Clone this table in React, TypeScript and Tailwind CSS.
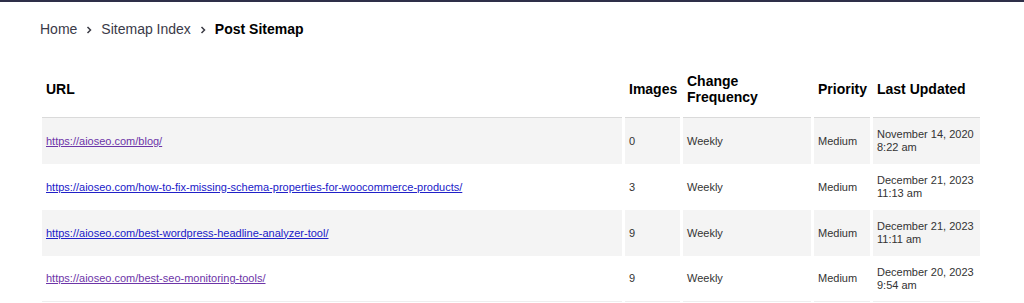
import React from 'react';

// ============================================================================
// Sitemap data
// ============================================================================

type Entry = {
  url: string;
  images: number;
  frequency: string;
  priority: string;
  date: string;
  time: string;
  visited: boolean;
};

const entries: Entry[] = [
  {
    url: 'https://aioseo.com/blog/',
    images: 0,
    frequency: 'Weekly',
    priority: 'Medium',
    date: 'November 14, 2020',
    time: '8:22 am',
    visited: true,
  },
  {
    url: 'https://aioseo.com/how-to-fix-missing-schema-properties-for-woocommerce-products/',
    images: 3,
    frequency: 'Weekly',
    priority: 'Medium',
    date: 'December 21, 2023',
    time: '11:13 am',
    visited: false,
  },
  {
    url: 'https://aioseo.com/best-wordpress-headline-analyzer-tool/',
    images: 9,
    frequency: 'Weekly',
    priority: 'Medium',
    date: 'December 21, 2023',
    time: '11:11 am',
    visited: false,
  },
  {
    url: 'https://aioseo.com/best-seo-monitoring-tools/',
    images: 9,
    frequency: 'Weekly',
    priority: 'Medium',
    date: 'December 20, 2023',
    time: '9:54 am',
    visited: true,
  },
];

const cols = 'grid grid-cols-[1fr_55px_128px_56px_107px] gap-x-[3px]';

const Chevron: React.FC = () => (
  <svg width="8" height="10" viewBox="0 0 8 10" className="mx-[8px] mt-[1px]">
    <path d="M2.5 2 L5.5 5 L2.5 8" fill="none" stroke="#3b3b45" strokeWidth="1.5" />
  </svg>
);

export default function App() {
  return (
    <div
      className="w-[1024px] h-[303px] overflow-hidden bg-white border-t-2 border-[#2e2f48]"
      style={{ fontFamily: '"Liberation Sans", Arial, sans-serif' }}
    >
      {/* Breadcrumb */}
      <nav className="flex items-center h-[20px] mt-[17px] pl-[40px] text-[14px] text-[#3a3a48]">
        <span>Home</span>
        <Chevron />
        <span>Sitemap Index</span>
        <Chevron />
        <span className="font-bold text-black">Post Sitemap</span>
      </nav>

      {/* Table */}
      <div className="pl-[42px] pr-[44px] mt-[22px] text-[#222]">
        <div className={`${cols} h-[57px] items-stretch`}>
          {['URL', 'Images', 'Change Frequency', 'Priority', 'Last Updated'].map((h) => (
            <div
              key={h}
              className="flex items-center px-[4px] text-[14px] font-bold leading-[16px] text-black border-b border-[#dadada]"
            >
              {h === 'Change Frequency' ? (
                <span>
                  Change
                  <br />
                  Frequency
                </span>
              ) : (
                h
              )}
            </div>
          ))}
        </div>

        {entries.map((e, i) => {
          const bg = i % 2 === 0 ? 'bg-[#f4f4f4]' : 'bg-white';
          const last = i === entries.length - 1 ? 'border-b border-[#eeeeee]' : '';
          const cell = `flex items-center px-[4px] text-[11px] leading-[13px] text-[#333] ${bg} ${last}`;
          return (
            <div key={e.url} className={`${cols} h-[46px]`}>
              <div className={cell}>
                <a
                  href="#"
                  className={`underline ${e.visited ? 'text-[#6d35a8]' : 'text-[#2020c8]'}`}
                >
                  {e.url}
                </a>
              </div>
              <div className={cell}>{e.images}</div>
              <div className={cell}>{e.frequency}</div>
              <div className={cell}>{e.priority}</div>
              <div className={cell}>
                <span>
                  {e.date}
                  <br />
                  {e.time}
                </span>
              </div>
            </div>
          );
        })}
      </div>
    </div>
  );
}
